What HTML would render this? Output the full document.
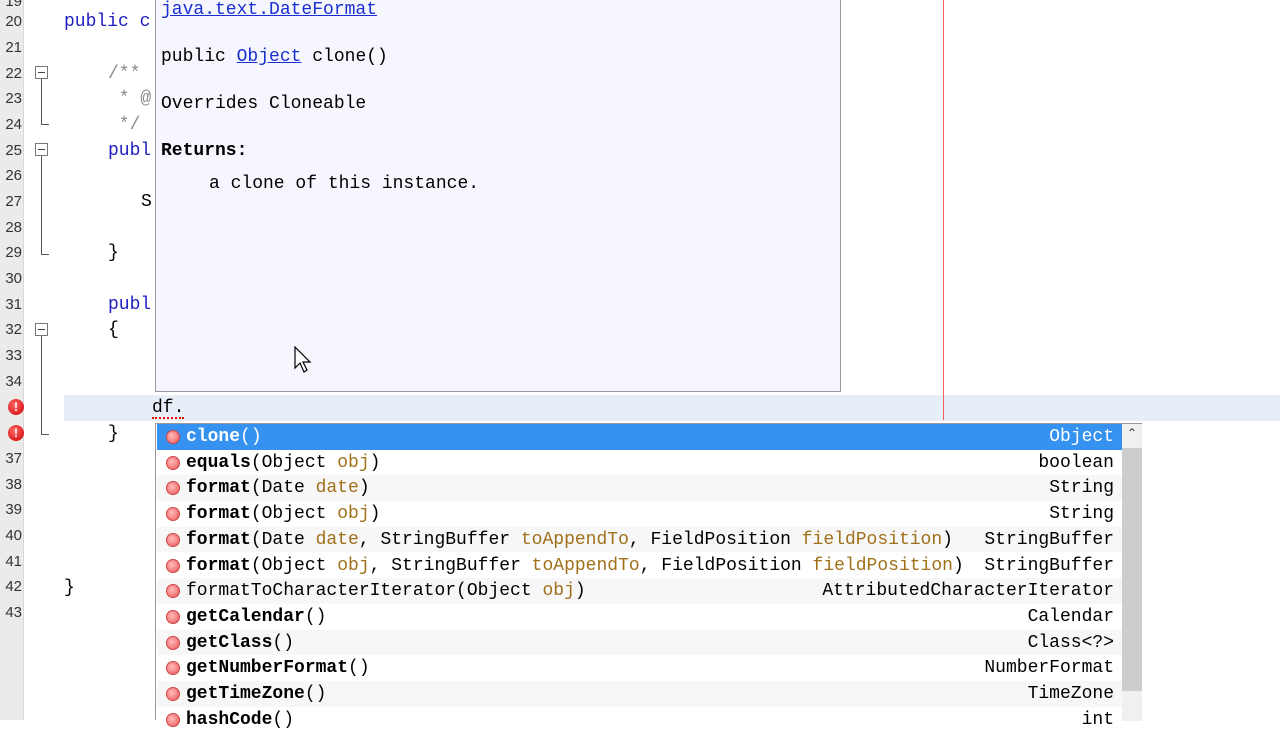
<!DOCTYPE html>
<html><head><meta charset="utf-8"><style>
*{margin:0;padding:0;box-sizing:border-box}
body{width:1280px;height:720px;overflow:hidden;background:#fff;position:relative;font-family:"Liberation Mono",monospace;font-size:18px;color:#000}
.a{position:absolute;white-space:pre;line-height:20px}
.g{position:absolute;left:0;top:0;width:24px;height:720px;background:#ebebeb;border-right:1px solid #d8d8d8}
.ln{position:absolute;left:0;width:22px;text-align:right;font-family:"Liberation Sans",sans-serif;font-size:15px;color:#333;line-height:20px}
.kw{color:#2020c0}
.cm{color:#8a8a8a}
.fold{position:absolute;left:35px;width:13px;height:13px;border:1px solid #777;background:#fff}
.fold:after{content:"";position:absolute;left:2px;top:5px;width:7px;height:1px;background:#444}
.vl{position:absolute;width:1px;background:#555}
.hl{position:absolute;height:1px;background:#555}
.err{position:absolute;left:8px;width:16px;height:16px;border-radius:50%;background:radial-gradient(circle at 40% 35%,#f66,#c00);color:#fff;font:bold 12px "Liberation Sans",sans-serif;text-align:center;line-height:16px}
.doc{position:absolute;left:155px;top:0;width:686px;height:392px;background:#f6f7fe;border:1px solid #999;border-top:none}
.cp{position:absolute;left:155px;top:423px;width:987px;height:297px;background:#fff;border:1px solid #999;border-bottom:none}
.row{position:absolute;left:1px;width:965px;height:25.7px}
.row .i{position:absolute;left:9px;top:6px;width:14px;height:14px;border-radius:50%;background:radial-gradient(circle at 40% 40%,#fbb,#e55);border:1px solid #c44}
.row .t{position:absolute;left:29px;top:3px;white-space:pre;line-height:20px}
.row .r{position:absolute;right:8px;top:3px;white-space:pre;line-height:20px}
.row b{font-weight:bold}
.p{color:#a0701a}
.sb{position:absolute;left:966px;top:0;width:20px;height:297px;background:#f0f0f0}
.th{position:absolute;left:966px;top:24px;width:20px;height:243px;background:#cdcdcd}
</style></head><body>
<div class="g"></div>
<div style="position:absolute;left:64px;top:395px;width:1216px;height:26px;background:#e8eef8"></div>
<div style="position:absolute;left:943px;top:0;width:1px;height:420px;background:#f06060"></div>

<div class="ln" style="top:-8px">19</div>
<div class="ln" style="top:12px">20</div>
<div class="ln" style="top:38px">21</div>
<div class="ln" style="top:64px">22</div>
<div class="ln" style="top:89px">23</div>
<div class="ln" style="top:115px">24</div>
<div class="ln" style="top:141px">25</div>
<div class="ln" style="top:166px">26</div>
<div class="ln" style="top:192px">27</div>
<div class="ln" style="top:218px">28</div>
<div class="ln" style="top:243px">29</div>
<div class="ln" style="top:269px">30</div>
<div class="ln" style="top:295px">31</div>
<div class="ln" style="top:320px">32</div>
<div class="ln" style="top:346px">33</div>
<div class="ln" style="top:372px">34</div>
<div class="err" style="top:399px">!</div>
<div class="err" style="top:425px">!</div>
<div class="ln" style="top:449px">37</div>
<div class="ln" style="top:475px">38</div>
<div class="ln" style="top:500px">39</div>
<div class="ln" style="top:526px">40</div>
<div class="ln" style="top:552px">41</div>
<div class="ln" style="top:577px">42</div>
<div class="ln" style="top:603px">43</div>

<div class="fold" style="top:66px"></div>
<div class="vl" style="left:41px;top:79px;height:45px"></div><div class="hl" style="left:41px;top:124px;width:8px"></div>
<div class="fold" style="top:143px"></div>
<div class="vl" style="left:41px;top:156px;height:98px"></div><div class="hl" style="left:41px;top:254px;width:8px"></div>
<div class="fold" style="top:323px"></div>
<div class="vl" style="left:41px;top:336px;height:98px"></div><div class="hl" style="left:41px;top:434px;width:8px"></div>

<div class="a kw" style="left:64px;top:12px">public c</div>
<div class="a cm" style="left:108px;top:64px">/**</div>
<div class="a cm" style="left:108px;top:89px"> * @</div>
<div class="a cm" style="left:108px;top:115px"> */</div>
<div class="a kw" style="left:108px;top:141px">publ</div>
<div class="a" style="left:141px;top:192px">S</div>
<div class="a" style="left:108px;top:243px">}</div>
<div class="a kw" style="left:108px;top:295px">publ</div>
<div class="a" style="left:108px;top:320px">{</div>
<div class="a" style="left:152px;top:398px">df.</div>
<div style="position:absolute;left:152px;top:417px;width:32px;border-bottom:2px dotted #e00"></div>
<div class="a" style="left:108px;top:424px">}</div>
<div class="a" style="left:64px;top:578px">}</div>

<div class="doc">
<div class="a" style="left:5px;top:0px;color:#1a2fd0;text-decoration:underline">java.text.DateFormat</div>
<div class="a" style="left:5px;top:47px">public <span style="color:#1a2fd0;text-decoration:underline">Object</span> clone()</div>
<div class="a" style="left:5px;top:94px">Overrides Cloneable</div>
<div class="a" style="left:5px;top:141px;font-weight:bold">Returns:</div>
<div class="a" style="left:53px;top:174px">a clone of this instance.</div>
<svg style="position:absolute;left:138px;top:346px" width="20" height="30" viewBox="0 0 20 30"><path d="M1 1 L1 22 L6 17 L10 26 L13 24 L9 16 L16 16 Z" fill="#fff" stroke="#000" stroke-width="1.2"/></svg>
</div>

<div class="cp">
<div class="row" style="top:0;background:#3592f0;color:#fff"><span class="i"></span><span class="t"><b>clone</b>()</span><span class="r">Object</span></div>
<div class="row" style="top:25.7px"><span class="i"></span><span class="t"><b>equals</b>(Object <span class="p">obj</span>)</span><span class="r">boolean</span></div>
<div class="row" style="top:51.4px;background:#f7f7f7"><span class="i"></span><span class="t"><b>format</b>(Date <span class="p">date</span>)</span><span class="r">String</span></div>
<div class="row" style="top:77.1px"><span class="i"></span><span class="t"><b>format</b>(Object <span class="p">obj</span>)</span><span class="r">String</span></div>
<div class="row" style="top:102.8px;background:#f7f7f7"><span class="i"></span><span class="t"><b>format</b>(Date <span class="p">date</span>, StringBuffer <span class="p">toAppendTo</span>, FieldPosition <span class="p">fieldPosition</span>)</span><span class="r">StringBuffer</span></div>
<div class="row" style="top:128.5px"><span class="i"></span><span class="t"><b>format</b>(Object <span class="p">obj</span>, StringBuffer <span class="p">toAppendTo</span>, FieldPosition <span class="p">fieldPosition</span>)</span><span class="r">StringBuffer</span></div>
<div class="row" style="top:154.2px;background:#f7f7f7"><span class="i"></span><span class="t">formatToCharacterIterator(Object <span class="p">obj</span>)</span><span class="r">AttributedCharacterIterator</span></div>
<div class="row" style="top:179.9px"><span class="i"></span><span class="t"><b>getCalendar</b>()</span><span class="r">Calendar</span></div>
<div class="row" style="top:205.6px;background:#f7f7f7"><span class="i"></span><span class="t"><b>getClass</b>()</span><span class="r">Class&lt;?&gt;</span></div>
<div class="row" style="top:231.3px"><span class="i"></span><span class="t"><b>getNumberFormat</b>()</span><span class="r">NumberFormat</span></div>
<div class="row" style="top:257px;background:#f7f7f7"><span class="i"></span><span class="t"><b>getTimeZone</b>()</span><span class="r">TimeZone</span></div>
<div class="row" style="top:282.7px"><span class="i"></span><span class="t"><b>hashCode</b>()</span><span class="r">int</span></div>
<div class="sb"></div><div class="th"></div>
<div style="position:absolute;left:966px;top:2px;width:20px;text-align:center;font:12px 'Liberation Sans',sans-serif;color:#333">&#8963;</div>
</div>
</body></html>
